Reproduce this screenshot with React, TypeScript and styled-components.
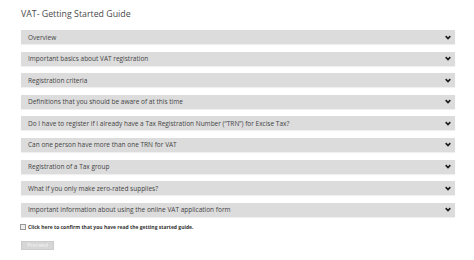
import React from "react";
import styled, { createGlobalStyle } from "styled-components";

const GlobalStyle = createGlobalStyle`
  html, body {
    margin: 0;
    padding: 0;
    background: #ffffff;
  }
  body {
    font-family: "Open Sans", "DejaVu Sans", sans-serif;
  }
`;

const sections = [
  "Overview",
  "Important basics about VAT registration",
  "Registration criteria",
  "Definitions that you should be aware of at this time",
  "Do I have to register if I already have a Tax Registration Number (\u201cTRN\u201d) for Excise Tax?",
  "Can one person have more than one TRN for VAT",
  "Registration of a Tax group",
  "What if you only make zero-rated supplies?",
  "Important information about using the online VAT application form",
];

const Page = styled.div`
  width: 474px;
  height: 260px;
  box-sizing: border-box;
  padding: 7px 19px 0 21px;
`;

const Title = styled.h1`
  margin: 0 0 9px 0;
  font-size: 8.8px;
  line-height: 14px;
  font-weight: 500;
  color: #4a4a4a;
`;

const List = styled.div`
  display: flex;
  flex-direction: column;
  gap: 7.6px;
`;

const Row = styled.div`
  height: 14px;
  display: flex;
  align-items: center;
  justify-content: space-between;
  padding: 0 4px 0 7px;
  background: #dcdcdc;
  box-shadow: 0 1px 1px rgba(0, 0, 0, 0.06);
`;

const Label = styled.span`
  font-size: 6.5px;
  color: #444;
  white-space: nowrap;
`;

const Chevron = () => (
  <svg width="6" height="5" viewBox="0 0 6 5">
    <path d="M0.7 1.1 L3 3.5 L5.3 1.1" fill="none" stroke="#1a1a1a" strokeWidth="1.6" />
  </svg>
);

const Confirm = styled.label`
  display: flex;
  align-items: center;
  gap: 2px;
  margin: 7px 0 0 -1px;
  font-size: 5px;
  font-weight: 700;
  color: #333;
`;

const Box = styled.span`
  width: 4px;
  height: 4px;
  border: 1px solid #999;
  background: #eee;
`;

const Button = styled.button`
  margin-top: 6px;
  width: 33px;
  height: 9px;
  padding: 0;
  border: 1px solid #ccc;
  background: #d6d6d6;
  color: #f4f4f4;
  font-family: "Open Sans", sans-serif;
  font-size: 5.5px;
  line-height: 7px;
`;

export default function App() {
  return (
    <Page>
      <GlobalStyle />
      <Title>VAT- Getting Started Guide</Title>
      <List>
        {sections.map((s) => (
          <Row key={s}>
            <Label>{s}</Label>
            <Chevron />
          </Row>
        ))}
      </List>
      <Confirm>
        <Box />
        Click here to confirm that you have read the getting started guide.
      </Confirm>
      <Button>Proceed</Button>
    </Page>
  );
}
